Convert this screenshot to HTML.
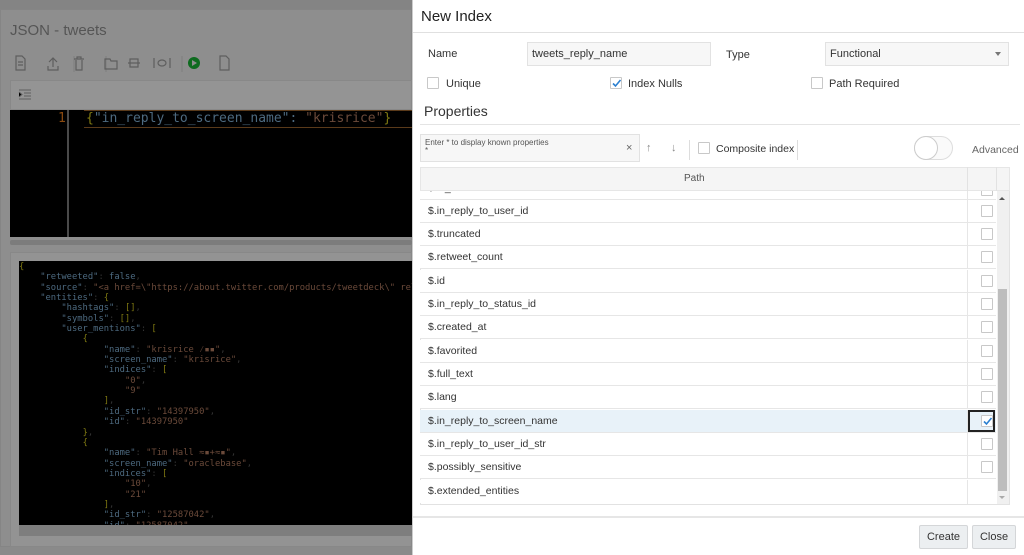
<!DOCTYPE html>
<html><head><meta charset="utf-8"><style>
*{box-sizing:border-box;margin:0;padding:0}
body{width:1024px;height:555px;overflow:hidden;position:relative;background:#8a8a8a;font-family:"Liberation Sans",sans-serif;font-size:11px;color:#333}
.a{position:absolute}
.mono{font-family:"DejaVu Sans Mono","Liberation Mono",monospace}
.cb{position:absolute;width:12px;height:12px;border:1px solid #c8c8c8;background:#fff;border-radius:1px}
.row{position:absolute;left:420px;width:576px;height:23px;border-bottom:1px solid #e6e6e6;background:#fff}
.row span{position:absolute;left:8px;top:5px;font-size:10.5px;color:#333}
.row .cb{left:561px;top:5px}
.row i{position:absolute;left:547px;top:0;bottom:-1px;border-left:1px solid #e6e6e6}
.k{color:#4d6a80}.s{color:#6b4a3a}.y{color:#807a12}
</style></head><body>
<div class="a" style="left:0;top:0;width:412px;height:9px;background:#848484"></div>
<div class="a" style="left:0;top:9px;width:412px;height:538px;background:#8e8e8e;border:1px solid #858585"></div>
<div class="a" style="left:10px;top:22px;font-size:15px;color:#555">JSON - tweets</div>
<svg class="a" style="left:12px;top:54px" width="230" height="18" fill="none" stroke="#5e5e5e" stroke-width="1.2">
<path d="M4 2h6l3 3v11H4z M6 8h5M6 11h5"/>
<path d="M36 12v4h10v-4M41 13V4M37 8l4-4 4 4"/>
<line x1="62" y1="2" x2="62" y2="18" stroke="#808080"/>
<path d="M62 5h10M65 5V3h4v2M64 6v10h6V6"/>
<line x1="94" y1="2" x2="94" y2="18" stroke="#808080"/>
<path d="M93 5h5l1 2h6v8H93z"/>
<path d="M118 5h8v8h-8zM116 9h12"/>
<path d="M142 4v10M158 4v10M146 9a4 3 0 1 0 8 0a4 3 0 1 0-8 0"/>
<line x1="170" y1="2" x2="170" y2="18" stroke="#808080"/>
<path d="M208 2h6l3 3v11h-9z"/>
</svg>
<div class="a" style="left:188px;top:57px;width:12px;height:12px;border-radius:50%;background:#0e6b1f"></div>
<div class="a" style="left:192px;top:60px;width:0;height:0;border-left:5px solid #8e8e8e;border-top:3px solid transparent;border-bottom:3px solid transparent"></div>
<div class="a" style="left:10px;top:80px;width:402px;height:30px;background:#949494;border:1px solid #888"></div>
<svg class="a" style="left:18px;top:89px" width="14" height="12" stroke="#5e5e5e" stroke-width="1"><path d="M1 1h12M6 4h7M6 7h7M1 10h12M1 3l3 2.5-3 2.5"/></svg>
<div class="a" style="left:10px;top:110px;width:402px;height:127px;background:#000"></div>
<div class="a" style="left:67px;top:110px;width:2px;height:127px;background:#4a4a4a"></div>
<div class="a mono" style="left:58px;top:111px;font-size:13px;color:#8a4a10">1</div>
<div class="a" style="left:84px;top:110px;width:328px;height:18px;border-top:1px solid #5a3a1a;border-bottom:1px solid #5a3a1a"></div>
<div class="a mono" style="left:86px;top:111px;font-size:13px;white-space:pre"><span class="y">{</span><span class="k">"in_reply_to_screen_name"</span><span class="k">: </span><span class="s">"krisrice"</span><span class="y">}</span></div>
<div class="a" style="left:10px;top:240px;width:402px;height:5px;background:#7c7c7c;border-radius:2px"></div>
<div class="a" style="left:10px;top:252px;width:402px;height:295px;background:#939393;border:1px solid #888"></div>
<div class="a" style="left:19px;top:261px;width:393px;height:264px;background:#000"></div>
<div class="a mono" style="left:19px;top:262px;font-size:8.8px;line-height:10.35px;white-space:pre"><span class="y">{</span>
    <span class="k">"retweeted"</span>: <span class="k">false</span>,
    <span class="k">"source"</span>: <span class="s">"&lt;a href=\"https://about.twitter.com/products/tweetdeck\" rel</span>
    <span class="k">"entities"</span>: <span class="y">{</span>
        <span class="k">"hashtags"</span>: <span class="y">[]</span>,
        <span class="k">"symbols"</span>: <span class="y">[]</span>,
        <span class="k">"user_mentions"</span>: <span class="y">[</span>
            <span class="y">{</span>
                <span class="k">"name"</span>: <span class="s">"krisrice ⁄▪▪"</span>,
                <span class="k">"screen_name"</span>: <span class="s">"krisrice"</span>,
                <span class="k">"indices"</span>: <span class="y">[</span>
                    <span class="s">"0"</span>,
                    <span class="s">"9"</span>
                <span class="y">]</span>,
                <span class="k">"id_str"</span>: <span class="s">"14397950"</span>,
                <span class="k">"id"</span>: <span class="s">"14397950"</span>
            <span class="y">}</span>,
            <span class="y">{</span>
                <span class="k">"name"</span>: <span class="s">"Tim Hall ≈▪+≈▪"</span>,
                <span class="k">"screen_name"</span>: <span class="s">"oraclebase"</span>,
                <span class="k">"indices"</span>: <span class="y">[</span>
                    <span class="s">"10"</span>,
                    <span class="s">"21"</span>
                <span class="y">]</span>,
                <span class="k">"id_str"</span>: <span class="s">"12587042"</span>,
                <span class="k">"id"</span>: <span class="s">"12587042"</span></div>
<div class="a" style="left:19px;top:525px;width:393px;height:11px;background:#7e7e7e"></div>

<div class="a" style="left:412px;top:0;width:612px;height:555px;background:#fff;border-left:1px solid #ccc"></div>
<div class="a" style="left:421px;top:8px;font-size:15px;color:#222">New Index</div>
<div class="a" style="left:413px;top:32px;width:611px;height:1px;background:#e0e0e0"></div>
<div class="a" style="left:428px;top:48px;font-size:11px">Name</div>
<div class="a" style="left:527px;top:42px;width:184px;height:24px;background:#f7f7f7;border:1px solid #e2e2e2"></div>
<div class="a" style="left:532px;top:48px;font-size:11px">tweets_reply_name</div>
<div class="a" style="left:726px;top:49px;font-size:11px">Type</div>
<div class="a" style="left:825px;top:42px;width:184px;height:24px;background:#f7f7f7;border:1px solid #e2e2e2"></div>
<div class="a" style="left:830px;top:48px;font-size:11px">Functional</div>
<div class="a" style="left:995px;top:52px;width:0;height:0;border-top:4px solid #777;border-left:3px solid transparent;border-right:3px solid transparent"></div>
<div class="cb" style="left:427px;top:77px"></div><div class="a" style="left:446px;top:78px">Unique</div>
<div class="cb" style="left:610px;top:77px"></div>
<svg class="a" style="left:611px;top:78px" width="11" height="11"><path d="M2 5.5l2.5 2.5 5-6" fill="none" stroke="#2a7fd0" stroke-width="1.6"/></svg>
<div class="a" style="left:628px;top:78px">Index Nulls</div>
<div class="cb" style="left:811px;top:77px"></div><div class="a" style="left:829px;top:78px">Path Required</div>
<div class="a" style="left:424px;top:103px;font-size:14px;color:#333">Properties</div>
<div class="a" style="left:420px;top:124px;width:600px;height:1px;background:#e4e4e4"></div>
<div class="a" style="left:420px;top:134px;width:220px;height:28px;background:#f7f7f7;border:1px solid #e2e2e2"></div>
<div class="a" style="left:425px;top:139px;font-size:8px;color:#555;line-height:8px">Enter * to display known properties<br>*</div>
<div class="a" style="left:626px;top:142px;font-size:11px;color:#666">×</div>
<div class="a" style="left:646px;top:142px;font-size:11px;color:#888">↑</div>
<div class="a" style="left:671px;top:142px;font-size:11px;color:#888">↓</div>
<div class="a" style="left:689px;top:140px;width:1px;height:20px;background:#ddd"></div>
<div class="cb" style="left:698px;top:142px"></div>
<div class="a" style="left:716px;top:143px;font-size:10.5px">Composite index</div>
<div class="a" style="left:797px;top:140px;width:1px;height:20px;background:#ddd"></div>
<div class="a" style="left:914px;top:136px;width:39px;height:24px;border:1px solid #ddd;border-radius:12px;background:#fafafa"></div>
<div class="a" style="left:914px;top:136px;width:24px;height:24px;border:1px solid #ccc;border-radius:50%;background:#fff"></div>
<div class="a" style="left:972px;top:144px;font-size:10.5px;color:#666">Advanced</div>
<div class="a" style="left:420px;top:167px;width:590px;height:338px;border:1px solid #e2e2e2;background:#fff"></div>
<div class="row" style="top:190px;height:10px;overflow:hidden"><span style="top:-8px">$.id_str</span><i></i><div class="cb" style="left:561px;top:-6px"></div></div>
<div class="a" style="left:420px;top:167px;width:590px;height:24px;background:#f5f5f5;border:1px solid #e6e6e6"></div>
<div class="a" style="left:684px;top:173px;font-size:10px;color:#555">Path</div>
<div class="a" style="left:967px;top:167px;width:1px;height:24px;background:#e2e2e2"></div>
<div class="a" style="left:996px;top:167px;width:1px;height:24px;background:#e2e2e2"></div>
<div class="row" style="top:200px"><span>$.in_reply_to_user_id</span><i></i><div class="cb"></div></div>
<div class="row" style="top:223px"><span>$.truncated</span><i></i><div class="cb"></div></div>
<div class="row" style="top:246px"><span>$.retweet_count</span><i></i><div class="cb"></div></div>
<div class="row" style="top:270px"><span>$.id</span><i></i><div class="cb"></div></div>
<div class="row" style="top:293px"><span>$.in_reply_to_status_id</span><i></i><div class="cb"></div></div>
<div class="row" style="top:316px"><span>$.created_at</span><i></i><div class="cb"></div></div>
<div class="row" style="top:340px"><span>$.favorited</span><i></i><div class="cb"></div></div>
<div class="row" style="top:363px"><span>$.full_text</span><i></i><div class="cb"></div></div>
<div class="row" style="top:386px"><span>$.lang</span><i></i><div class="cb"></div></div>
<div class="row" style="top:410px;background:#e8f2f9"><span>$.in_reply_to_screen_name</span><i></i>
<div class="a" style="left:548px;top:0;width:27px;height:22px;border:2px solid #222"></div><div class="cb"></div>
<svg class="a" style="left:562px;top:6px" width="11" height="11"><path d="M2 5.5l2.5 2.5 5-6" fill="none" stroke="#2a7fd0" stroke-width="1.6"/></svg></div>
<div class="row" style="top:433px"><span>$.in_reply_to_user_id_str</span><i></i><div class="cb"></div></div>
<div class="row" style="top:456px"><span>$.possibly_sensitive</span><i></i><div class="cb"></div></div>
<div class="row" style="top:480px;border-bottom:none"><span>$.extended_entities</span><i></i></div>
<div class="a" style="left:997px;top:191px;width:12px;height:313px;background:#f0f0f0"></div>
<div class="a" style="left:998px;top:289px;width:9px;height:202px;background:#bdbdbd"></div>
<div class="a" style="left:999px;top:197px;width:0;height:0;border-bottom:3px solid #555;border-left:3px solid transparent;border-right:3px solid transparent"></div>
<div class="a" style="left:999px;top:496px;width:0;height:0;border-top:3px solid #aaa;border-left:3px solid transparent;border-right:3px solid transparent"></div>
<div class="a" style="left:413px;top:516px;width:611px;height:2px;background:#e6e6e6"></div>
<div class="a" style="left:919px;top:525px;width:49px;height:24px;background:#eceff1;border:1px solid #d4d6d8;border-radius:2px;text-align:center;line-height:22px;font-size:11px">Create</div>
<div class="a" style="left:972px;top:525px;width:44px;height:24px;background:#eceff1;border:1px solid #d4d6d8;border-radius:2px;text-align:center;line-height:22px;font-size:11px">Close</div>
</body></html>
